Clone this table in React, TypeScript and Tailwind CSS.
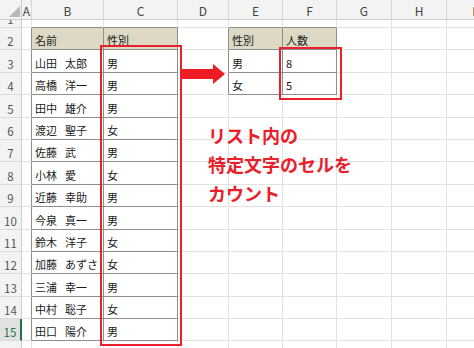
const rows = [
  ["山田", "太郎", "男"],
  ["高橋", "洋一", "男"],
  ["田中", "雄介", "男"],
  ["渡辺", "聖子", "女"],
  ["佐藤", "武", "男"],
  ["小林", "愛", "女"],
  ["近藤", "幸助", "男"],
  ["今泉", "真一", "男"],
  ["鈴木", "洋子", "女"],
  ["加藤", "あずさ", "女"],
  ["三浦", "幸一", "男"],
  ["中村", "聡子", "女"],
  ["田口", "陽介", "男"],
]

const cols = ["A", "B", "C", "D", "E", "F", "G", "H", "I"]
const rowNums = Array.from({ length: 16 }, (_, i) => i + 1)

// B=1, C=2, E=4, F=5
function inTable(r: number, c: number) {
  if ((c === 1 || c === 2) && r >= 2 && r <= 15) return true
  if ((c === 4 || c === 5) && r >= 2 && r <= 4) return true
  return false
}

function cellText(r: number, c: number) {
  if (r === 2) {
    if (c === 1) return "名前"
    if (c === 2 || c === 4) return "性別"
    if (c === 5) return "人数"
  }
  if (r >= 3 && r <= 15) {
    const d = rows[r - 3]
    if (c === 1)
      return (
        <>
          {d[0]}
          <span className="inline-block w-2" />
          {d[1]}
        </>
      )
    if (c === 2) return d[2]
  }
  if (r === 3 && c === 4) return "男"
  if (r === 3 && c === 5) return "8"
  if (r === 4 && c === 4) return "女"
  if (r === 4 && c === 5) return "5"
  return null
}

function Cell({ r, c }: { r: number; c: number }) {
  const right = inTable(r, c) || inTable(r, c + 1) ? "border-r-[#8e8e8e]" : "border-r-[#e2e2e2]"
  const bottom = inTable(r, c) || inTable(r + 1, c) ? "border-b-[#8e8e8e]" : "border-b-[#e2e2e2]"
  const bg = r === 2 && inTable(r, c) ? "bg-[#ddd9c4]" : "bg-white"
  return (
    <div className={`flex items-end overflow-hidden border-r border-b pb-[2px] pl-[3px] text-[11px] leading-[14px] whitespace-nowrap text-[#1b1b1b] ${right} ${bottom} ${bg}`}>
      {cellText(r, c)}
    </div>
  )
}

function RowHead({ n }: { n: number }) {
  const active = n === 15
  return (
    <div
      className={`flex items-end justify-center overflow-hidden border-b border-b-[#dadada] pb-[1px] text-[11.5px] leading-[14px] ${
        active ? "border-r-2 border-r-[#217346] bg-[#e1e1e1] text-[#217346]" : "border-r border-r-[#cdcdcd] bg-[#f3f3f3] text-[#555]"
      }`}
    >
      {n}
    </div>
  )
}

export default function App() {
  return (
    <div className="relative h-[348px] w-[474px] overflow-hidden bg-white font-['Noto_Sans_CJK_JP',sans-serif]">
      <div className="grid grid-cols-[22px_10px_72px_74px_51px_54px_54px_55px_55px_55px] grid-rows-[20px_8px_repeat(14,22.4px)_30px]">
        <div className="relative border-r border-b border-r-[#cdcdcd] border-b-[#cdcdcd] bg-[#f3f3f3]">
          <svg className="absolute right-[1px] bottom-[2px]" width="11" height="11" viewBox="0 0 11 11">
            <polygon points="11,0 11,11 0,11" fill="#b8b8b8" />
          </svg>
        </div>
        {cols.map((l) => (
          <div
            key={l}
            className="flex items-center justify-center border-r border-b border-r-[#d6d6d6] border-b-[#cdcdcd] bg-[#f3f3f3] pt-[2px] text-[12px] text-[#444]"
          >
            {l}
          </div>
        ))}
        {rowNums.map((n) => (
          <div key={n} className="contents">
            <RowHead n={n} />
            {cols.map((_, c) => (
              <Cell key={c} r={n} c={c} />
            ))}
          </div>
        ))}
      </div>

      {/* red frames */}
      <div className="absolute top-[45px] left-[100px] h-[301px] w-[82px] border-2 border-[#e8202a]" />
      <div className="absolute top-[47px] left-[279px] h-[53px] w-[63px] border-2 border-[#e8202a]" />

      {/* arrow */}
      <svg className="absolute top-[62px] left-[181px]" width="46" height="24" viewBox="0 0 46 24">
        <polygon points="0,7 32,7 32,2 44,12 32,22 32,17 0,17" fill="#ee1c25" />
      </svg>

      <div className="absolute top-[121px] left-[208px] text-[18px] leading-[29px] font-bold text-[#e8202a]">
        <p>リスト内の</p>
        <p>特定文字のセルを</p>
        <p>カウント</p>
      </div>
    </div>
  )
}
